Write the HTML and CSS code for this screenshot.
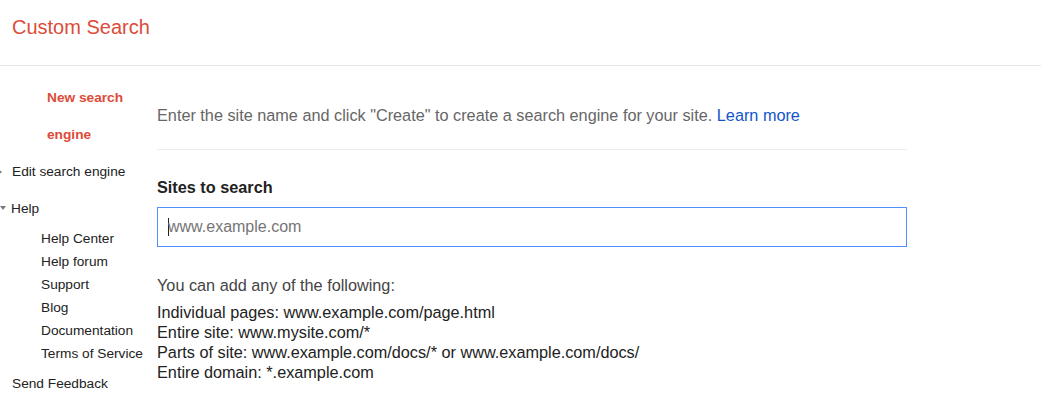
FILE: index.html
```html
<!DOCTYPE html>
<html lang="en">
<head>
<meta charset="utf-8">
<title>Custom Search</title>
<link rel="stylesheet" href="styles.css">
</head>
<body>
<header class="topbar">
  <div class="brand">Custom Search</div>
</header>
<div class="layout">
  <nav class="sidenav">
    <div class="nav-current">New search engine</div>
    <div class="nav-item"><span class="arrow arrow-right"></span>Edit search engine</div>
    <div class="nav-item"><span class="arrow arrow-down"></span>Help</div>
    <ul class="subnav">
      <li>Help Center</li>
      <li>Help forum</li>
      <li>Support</li>
      <li>Blog</li>
      <li>Documentation</li>
      <li>Terms of Service</li>
    </ul>
    <div class="nav-item">Send Feedback</div>
  </nav>
  <main class="content">
    <p class="intro">Enter the site name and click "Create" to create a search engine for your site. <a class="link" href="#">Learn more</a></p>
    <hr class="divider">
    <h2 class="label">Sites to search</h2>
    <div class="field"><span class="caret"></span><span class="placeholder">www.example.com</span></div>
    <p class="hint">You can add any of the following:</p>
    <ul class="examples">
      <li>Individual pages: www.example.com/page.html</li>
      <li>Entire site: www.mysite.com/*</li>
      <li>Parts of site: www.example.com/docs/* or www.example.com/docs/</li>
      <li>Entire domain: *.example.com</li>
    </ul>
  </main>
</div>
</body>
</html>
```
FILE: styles.css
```css
html, body {
  margin: 0;
  padding: 0;
  background: #fff;
  font-family: "Liberation Sans", Arial, sans-serif;
  color: #222;
}
.topbar {
  box-sizing: border-box;
  height: 66px;
  border-bottom: 1px solid #e5e5e5;
}
.brand {
  padding: 15px 0 0 12px;
  font-size: 20px;
  line-height: 24px;
  color: #dd4b39;
}
.layout {
  display: flex;
  gap: 12px;
}
.sidenav {
  width: 145px;
  flex: none;
  padding-top: 13px;
  font-size: 13.7px;
  color: #222;
}
.nav-current {
  padding-left: 47px;
  font-weight: bold;
  color: #dd4b39;
  line-height: 37px;
}
.nav-item {
  padding-left: 12px;
  line-height: 37px;
  display: flex;
  align-items: center;
  white-space: nowrap;
}
.arrow {
  width: 0;
  height: 0;
  flex: none;
  border-style: solid;
  border-color: transparent;
}
.arrow-right {
  border-width: 3.5px 0 3.5px 4px;
  border-left-color: #777;
  margin-left: -14px;
  margin-right: 10px;
}
.arrow-down {
  border-width: 4px 3.5px 0 3.5px;
  border-top-color: #777;
  margin-left: -12px;
  margin-right: 5px;
  margin-top: -1px;
}
.subnav {
  list-style: none;
  margin: 0;
  padding: 0 0 0 41px;
}
.subnav li {
  line-height: 23px;
  white-space: nowrap;
}
.content {
  width: 750px;
  padding-top: 39px;
  font-size: 16.25px;
}
.intro {
  margin: 0;
  line-height: 20px;
  color: #666;
}
.link {
  color: #15c;
  text-decoration: none;
}
.divider {
  margin: 24px 0 0;
  border: 0;
  border-top: 1px solid #ebebeb;
  height: 0;
}
.label {
  margin: 27px 0 0;
  font-size: 16.25px;
  line-height: 20px;
  font-weight: bold;
  color: #222;
}
.field {
  margin-top: 10px;
  height: 38px;
  width: 738px;
  border: 1px solid #4d90fe;
  display: flex;
  align-items: center;
  padding-left: 10px;
}
.caret {
  width: 1px;
  height: 18px;
  background: #222;
  margin-right: -1px;
}
.placeholder {
  font-size: 16px;
  color: #757575;
}
.hint {
  margin: 28px 0 0;
  line-height: 20px;
  color: #444;
}
.examples {
  list-style: none;
  margin: 7px 0 0;
  padding: 0;
  color: #222;
}
.examples li {
  line-height: 20px;
}
```
